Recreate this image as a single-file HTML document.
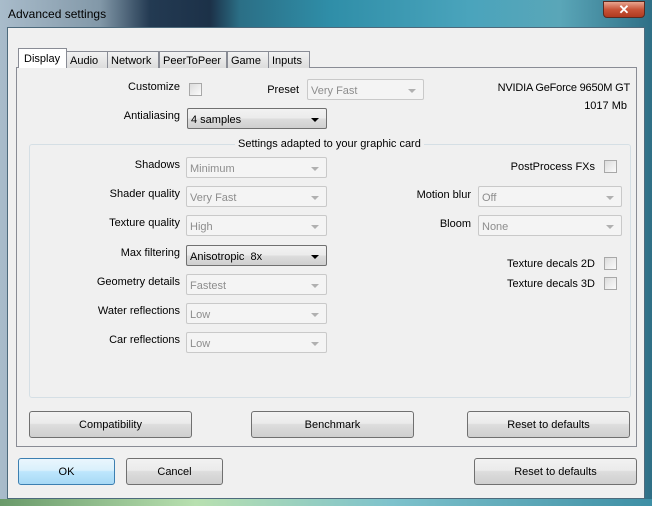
<!DOCTYPE html>
<html><head><style>
*{box-sizing:border-box;margin:0;padding:0}
body{width:652px;height:506px;overflow:hidden;font-family:"Liberation Sans",sans-serif;font-size:11px;color:#000;position:relative;
background:linear-gradient(90deg,#a9bccb 0,#8298a8 100px,#233a52 150px,#1c3148 210px,#2b6f86 240px,#2f8ea8 330px,#4aa4bc 470px,#5aa6b8 560px,#2f6f86 652px);}
.a{position:absolute}
.title{left:8px;top:7px;font-size:12px;color:#000}
.client{left:7px;top:27px;width:638px;height:472px;background:#f0f0f0;border:1px solid #4d6a7c}
.bottom{left:0;top:499px;width:652px;height:7px;background:linear-gradient(90deg,#6a9a6a,#b8e0b0 30%,#7ec2cc 60%,#3e8fa5)}
.close{left:603px;top:1px;width:42px;height:17px;border:1px solid #5a2a20;border-radius:0 0 4px 4px;background:linear-gradient(#e8a590,#c85438 50%,#b03a20);color:#fff;font-weight:bold;text-align:center;font-size:13px;line-height:15px}
.panel{left:16px;top:67px;width:621px;height:380px;border:1px solid #898c95;background:#f0f0f0}
.tab{top:51px;height:17px;border:1px solid #898c95;border-bottom:none;background:linear-gradient(#f2f2f2,#dcdcdc);padding:3px 3px 0 3px;font-size:11px}
.tab.on{top:48px;height:20px;background:#fff;padding-top:4px}
.grp{left:29px;top:144px;width:602px;height:254px;border:1px solid #d5dfe5;border-radius:3px}
.gl{left:235px;top:138px;background:#f0f0f0;padding:0 3px}
.lbl{text-align:right}
.cb{width:161px;height:21px;border:1px solid #c9c9c9;border-radius:2px;background:#f4f4f4;color:#8d8d8d;padding:5px 3px 0;font-size:11px}
.cb:after{content:"";position:absolute;right:7px;top:9px;border-left:4px solid transparent;border-right:4px solid transparent;border-top:4px solid #b0b0b0}
.cb.en{border-color:#707070;background:linear-gradient(#f2f2f2,#ebebeb 50%,#dddddd 51%,#cfcfcf);color:#000}
.cb.en:after{border-top-color:#000}
.chk{width:13px;height:13px;border:1px solid #a8a8a8;background:linear-gradient(135deg,#dcdcdc,#fbfbfb)}
.btn{height:27px;border:1px solid #707070;border-radius:3px;background:linear-gradient(#f2f2f2,#ebebeb 45%,#dddddd 50%,#cfcfcf);text-align:center;line-height:26px;font-size:11px}
.btn.def{border-color:#3c7fb1;background:linear-gradient(#eaf6fd,#d9f0fc 45%,#bee6fd 50%,#a7d9f5)}
</style></head><body>
<div class="a title">Advanced settings</div>
<div class="a close">✕</div>
<div class="a client"></div>
<div class="a bottom"></div>
<div class="a panel"></div>
<div class="a tab" style="left:66px;width:42px">Audio</div>
<div class="a tab" style="left:107px;width:52px">Network</div>
<div class="a tab" style="left:159px;width:68px">PeerToPeer</div>
<div class="a tab" style="left:227px;width:42px">Game</div>
<div class="a tab" style="left:268px;width:42px">Inputs</div>
<div class="a tab on" style="left:18px;width:49px;padding-left:5px">Display</div>

<div class="a lbl" style="left:100px;top:81px;width:80px">Customize</div>
<div class="a chk" style="left:189px;top:83px"></div>
<div class="a lbl" style="left:240px;top:84px;width:59px">Preset</div>
<div class="a cb" style="left:307px;top:79px;width:117px">Very Fast</div>
<div class="a lbl" style="left:100px;top:110px;width:80px">Antialiasing</div>
<div class="a cb en" style="left:187px;top:108px;width:140px">4 samples</div>
<div class="a" style="left:430px;top:82px;width:200px;text-align:right;letter-spacing:-0.2px">NVIDIA GeForce 9650M GT</div>
<div class="a" style="left:530px;top:100px;width:97px;text-align:right">1017 Mb</div>

<div class="a grp"></div>
<div class="a gl">Settings adapted to your graphic card</div>

<div class="a lbl" style="left:40px;top:159px;width:140px">Shadows</div>
<div class="a cb" style="left:186px;top:157px;width:141px">Minimum</div>
<div class="a lbl" style="left:40px;top:188px;width:140px">Shader quality</div>
<div class="a cb" style="left:186px;top:186px;width:141px">Very Fast</div>
<div class="a lbl" style="left:40px;top:217px;width:140px">Texture quality</div>
<div class="a cb" style="left:186px;top:215px;width:141px">High</div>
<div class="a lbl" style="left:40px;top:247px;width:140px">Max filtering</div>
<div class="a cb en" style="left:186px;top:245px;width:141px">Anisotropic&nbsp; 8x</div>
<div class="a lbl" style="left:40px;top:276px;width:140px">Geometry details</div>
<div class="a cb" style="left:186px;top:274px;width:141px">Fastest</div>
<div class="a lbl" style="left:40px;top:305px;width:140px">Water reflections</div>
<div class="a cb" style="left:186px;top:303px;width:141px">Low</div>
<div class="a lbl" style="left:40px;top:334px;width:140px">Car reflections</div>
<div class="a cb" style="left:186px;top:332px;width:141px">Low</div>

<div class="a lbl" style="left:480px;top:161px;width:115px">PostProcess FXs</div>
<div class="a chk" style="left:604px;top:160px"></div>
<div class="a lbl" style="left:400px;top:189px;width:71px">Motion blur</div>
<div class="a cb" style="left:478px;top:186px;width:144px">Off</div>
<div class="a lbl" style="left:400px;top:218px;width:71px">Bloom</div>
<div class="a cb" style="left:478px;top:215px;width:144px">None</div>
<div class="a lbl" style="left:480px;top:258px;width:115px">Texture decals 2D</div>
<div class="a chk" style="left:604px;top:257px"></div>
<div class="a lbl" style="left:480px;top:278px;width:115px">Texture decals 3D</div>
<div class="a chk" style="left:604px;top:277px"></div>

<div class="a btn" style="left:29px;top:411px;width:163px">Compatibility</div>
<div class="a btn" style="left:251px;top:411px;width:163px">Benchmark</div>
<div class="a btn" style="left:467px;top:411px;width:163px">Reset to defaults</div>
<div class="a btn def" style="left:18px;top:458px;width:97px">OK</div>
<div class="a btn" style="left:126px;top:458px;width:97px">Cancel</div>
<div class="a btn" style="left:474px;top:458px;width:163px">Reset to defaults</div>
</body></html>
